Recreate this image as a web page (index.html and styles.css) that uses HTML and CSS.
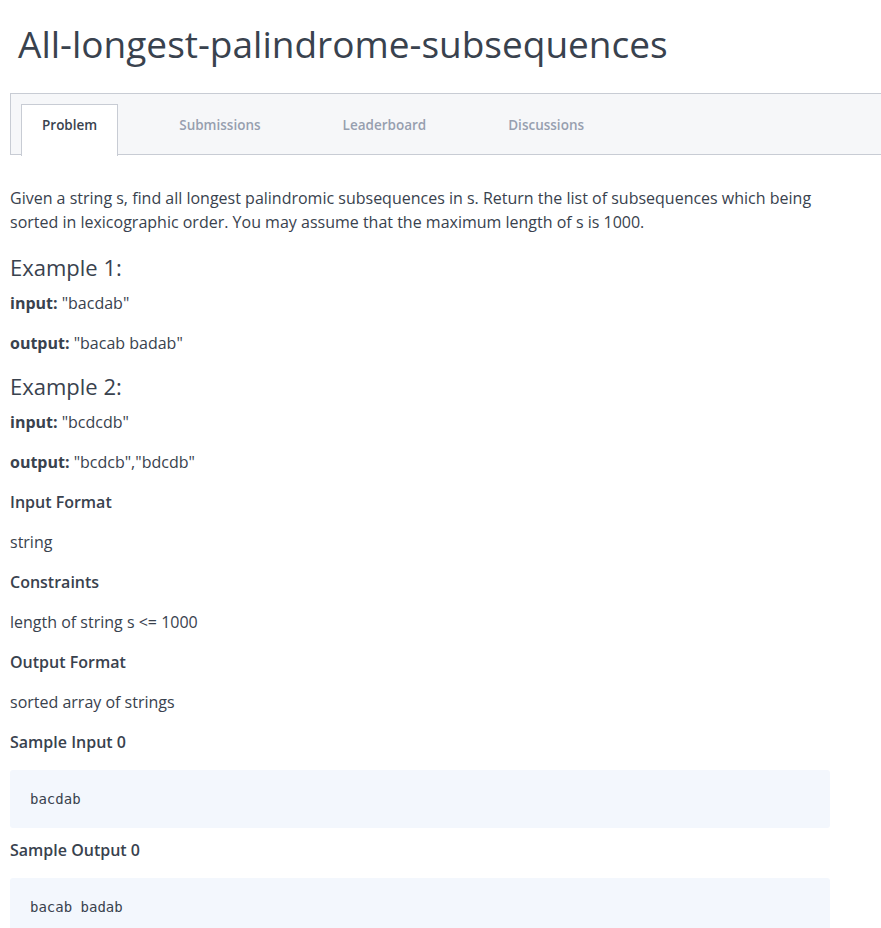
FILE: index.html
```html
<!DOCTYPE html>
<html lang="en">
<head>
    <meta charset="UTF-8">
    <meta name="viewport" content="width=device-width, initial-scale=1.0">
    <title>All-longest-palindrome-subsequences</title>
    <link rel="stylesheet" href="styles.css">
</head>
<body>

    <h1 class="title">All-longest-palindrome-subsequences</h1>

    <div class="tabs">
        <div class="tab active">Problem</div>
        <div class="tab">Submissions</div>
        <div class="tab">Leaderboard</div>
        <div class="tab">Discussions</div>
    </div>

    <div class="problem">
        <p class="intro">Given a string s, find all longest palindromic subsequences in s. Return the list of subsequences which being sorted in lexicographic order. You may assume that the maximum length of s is 1000.</p>

        <h3 class="example">Example 1:</h3>
        <p><strong>input:</strong> "bacdab"</p>
        <p><strong>output:</strong> "bacab badab"</p>

        <h3 class="example">Example 2:</h3>
        <p><strong>input:</strong> "bcdcdb"</p>
        <p><strong>output:</strong> "bcdcb","bdcdb"</p>

        <p class="label">Input Format</p>
        <p>string</p>

        <p class="label">Constraints</p>
        <p>length of string s &lt;= 1000</p>

        <p class="label">Output Format</p>
        <p>sorted array of strings</p>

        <p class="label">Sample Input 0</p>
        <pre class="code">bacdab</pre>

        <p class="label">Sample Output 0</p>
        <pre class="code">bacab badab</pre>
    </div>

</body>
</html>
```

FILE: styles.css
```css
* {
    margin: 0;
    padding: 0;
    box-sizing: border-box;
}

body {
    font-family: 'Open Sans', sans-serif;
    color: #39424e;
    background: #fff;
    padding: 0 0 40px 10px;
}

.title {
    font-size: 37px;
    font-weight: 400;
    line-height: 48px;
    padding: 20px 0 0 8px;
    margin-bottom: 25px;
    color: #39424e;
}

.tabs {
    display: flex;
    gap: 40px;
    height: 62px;
    padding: 10px 0 0 10px;
    background: #f6f7f9;
    border: 1px solid #c8ccd4;
    border-right: none;
}

.tab {
    padding: 12px 21px 0;
    height: 52px;
    font-size: 13.5px;
    font-weight: 600;
    line-height: 18px;
    color: #979faf;
}

.tab.active {
    background: #fff;
    color: #39424e;
    border: 1px solid #c8ccd4;
    border-bottom: none;
    padding: 11px 20px 0;
}

.problem {
    padding-top: 31px;
    width: 820px;
}

.problem p {
    font-size: 16px;
    line-height: 24px;
    margin-bottom: 16px;
}

.problem .intro {
    margin-bottom: 18px;
}

.problem strong {
    font-weight: 700;
}

.example {
    font-size: 22px;
    font-weight: 400;
    line-height: 30px;
    margin-bottom: 9px;
}

.problem .label {
    font-weight: 600;
}

.code {
    background: #f3f7fd;
    border-radius: 3px;
    font-family: 'DejaVu Sans Mono', monospace;
    font-size: 14px;
    line-height: 18px;
    padding: 20px 20px;
    margin: 12px 0 10px;
    color: #39424e;
}
```
